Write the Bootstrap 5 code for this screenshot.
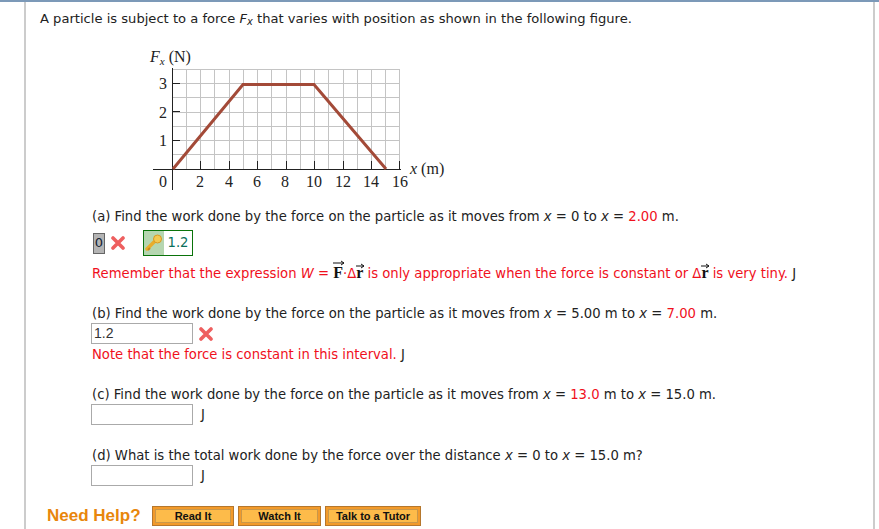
<!DOCTYPE html>
<html lang="en">
<head>
<meta charset="utf-8">
<title>Work problem</title>
<link href="https://cdn.jsdelivr.net/npm/bootstrap@5.3.0/dist/css/bootstrap.min.css" rel="stylesheet">
<style>
html,body{height:529px;overflow:hidden;background:#fff}
body{font-family:"DejaVu Sans",Verdana,sans-serif;font-size:13.1px;line-height:18px;color:#222;border-top:2px solid #7c99b8}
.sheet{margin-left:24px;width:851px;height:527px;border-left:2px solid #ccc;border-right:2px solid #ccc;padding:8px 0 0 14px}
.sheet p{margin:0}
.fig{display:block;margin:13px 0 0 81px}
.fig text{font-family:"Liberation Serif",serif;font-size:16px;fill:#222}
.parts{margin:12px 0 0 52px;font-size:13.2px}
.part{height:61px}
.partb{height:81px}
.parta{height:97px}
.red{color:#f0101c}
.xmark{margin-left:6px}
.vec{font-family:"Liberation Serif",serif;font-weight:700;font-size:16px;color:#111;position:relative;display:inline-block;line-height:14px}
.vec svg{position:absolute;left:0;top:-3px}
.vec .arrowf{left:0;top:-6px}
.unit{color:#222}
.ansrow{height:26px;margin-top:4px}
.remark{margin-top:9px !important}
.wrongbox{height:21px;width:12px;margin-left:1px;background:#b4b4b4;border:1px solid #666;font-size:13px;line-height:18px;text-align:center;color:#123}
.keybox{height:26px;width:50px;border:1px solid #0a730a;margin-left:18px;font-size:13.2px;color:#0a6f5a}
.keyicon{width:20px;background:#b5d6b0}
.keyval{line-height:24px}
.field{width:102px;height:21px;margin-left:-1px;border:1px solid #aaa;font-family:"Liberation Sans",sans-serif;font-size:14px;line-height:19px;padding-left:2px;color:#333;background:#fff}
.fieldrow{height:21px}
.notep{margin-top:2px !important}
.need{font-family:"Liberation Sans",sans-serif;font-weight:700;font-size:17px;color:#e8860c;width:105px;line-height:20px;white-space:nowrap}
.helpbar{margin:-2px 0 0 7px}
.helpbtn{background:#fdbb4a;border:1px solid #b5772d;border-radius:0;padding:0;font-family:"Liberation Sans",sans-serif;font-weight:700;font-size:11px;line-height:18px;height:20px;color:#111;box-shadow:inset 0 0 0 2px #f39a2a,inset 0 0 0 3px #c9974a}
.helpbtn:hover{background:#fdbb4a;color:#111}
.w1{width:82px}.w2{width:83px}.w3{width:96px}
</style>
</head>
<body>
<div class="sheet">
  <p>A particle is subject to a force <i>F<sub>x</sub></i> that varies with position as shown in the following figure.</p>
  <svg class="fig" width="330" height="155" viewBox="0 0 330 155" role="img" aria-label="Graph of force against position">
    <g transform="translate(-120,-41)">
      <g stroke="#c4c4c4" stroke-width="1" fill="none">
        <path d="M185.500 69V169M199.500 69V169M213.500 69V169M228.500 69V169M242.500 69V169M256.500 69V169M270.500 69V169M285.500 69V169M299.500 69V169M313.500 69V169M327.500 69V169M342.500 69V169M356.500 69V169M370.500 69V169M384.500 69V169M398.500 69V169"/>
        <path d="M171 69.500H398M171 83.500H398M171 97.500H398M171 112.500H398M171 126.500H398M171 140.500H398M171 154.500H398"/>
      </g>
      <g stroke="#222" stroke-width="1" fill="none">
        <path d="M171.500 68V190M152 169.500H400"/>
        <path d="M171 83.500H179M171 111.500H179M171 140.500H179"/>
        <path d="M199.500 161V169M228.500 161V169M256.500 161V169M285.500 161V169M313.500 161V169M342.500 161V169M370.500 161V169M398.500 161V169"/>
      </g>
      <path d="M172 169L242 84.500H313L385 169" fill="none" stroke="#a34a38" stroke-width="3"/>
      <text x="149" y="62"><tspan font-style="italic">F</tspan><tspan font-style="italic" font-size="11" dy="3">x</tspan><tspan dy="-3"> (N)</tspan></text>
      <text x="158" y="89">3</text><text x="158" y="118">2</text><text x="158" y="146">1</text>
      <text x="158" y="187">0</text><text x="195" y="187">2</text><text x="224" y="187">4</text>
      <text x="252" y="187">6</text><text x="280" y="187">8</text><text x="305" y="187">10</text>
      <text x="334" y="187">12</text><text x="362" y="187">14</text><text x="391" y="187">16</text>
      <text x="409" y="174"><tspan font-style="italic">x</tspan> (m)</text>
    </g>
  </svg>
  <div class="parts">
    <div class="parta">
      <p>(a) Find the work done by the force on the particle as it moves from <i>x</i> = 0 to <i>x</i> = <span class="red">2.00</span> m.</p>
      <div class="ansrow d-flex align-items-center">
        <div class="wrongbox">0</div>
        <svg class="xmark" width="14" height="14" viewBox="0 0 14 14" aria-hidden="true"><path d="M2 2L12 12M12 2L2 12" stroke="#ee5f5f" stroke-width="3.600" stroke-linecap="round"/></svg>
        <div class="keybox d-flex">
          <span class="keyicon d-flex align-items-center justify-content-center">
            <svg width="18" height="18" viewBox="0 0 18 18" aria-hidden="true"><path d="M2 15L10 7" stroke="#e8ad2c" stroke-width="3.500" stroke-linecap="round"/><path d="M3 16L5 14" stroke="#c98a1a" stroke-width="2"/><circle cx="12.500" cy="5" r="4" fill="#f3c850" stroke="#d69a25"/></svg>
          </span>
          <span class="keyval flex-grow-1 text-center">1.2</span>
        </div>
      </div>
      <p class="red remark">Remember that the expression <i>W</i> = <span class="vec">F<svg class="arrowf" width="12" height="6" viewBox="0 0 12 6" aria-hidden="true"><path d="M0 3H11M8 1L11 3L8 5" stroke="#111" fill="none"/></svg></span>·Δ<span class="vec">r<svg width="9" height="6" viewBox="0 0 9 6" aria-hidden="true"><path d="M0 3H8M5 1L8 3L5 5" stroke="#111" fill="none"/></svg></span> is only appropriate when the force is constant or Δ<span class="vec">r<svg width="9" height="6" viewBox="0 0 9 6" aria-hidden="true"><path d="M0 3H8M5 1L8 3L5 5" stroke="#111" fill="none"/></svg></span> is very tiny. <span class="unit">J</span></p>
    </div>
    <div class="partb">
      <p>(b) Find the work done by the force on the particle as it moves from <i>x</i> = 5.00 m to <i>x</i> = <span class="red">7.00</span> m.</p>
      <div class="fieldrow d-flex align-items-center">
        <div class="field">1.2</div>
        <svg class="xmark" width="14" height="14" viewBox="0 0 14 14" aria-hidden="true"><path d="M2 2L12 12M12 2L2 12" stroke="#ee5f5f" stroke-width="3.600" stroke-linecap="round"/></svg>
      </div>
      <p class="red notep">Note that the force is constant in this interval. <span class="unit">J</span></p>
    </div>
    <div class="part">
      <p>(c) Find the work done by the force on the particle as it moves from <i>x</i> = <span class="red">13.0</span> m to <i>x</i> = 15.0 m.</p>
      <div class="fieldrow d-flex align-items-center gap-2"><div class="field"></div><span>J</span></div>
    </div>
    <div class="part">
      <p>(d) What is the total work done by the force over the distance <i>x</i> = 0 to <i>x</i> = 15.0 m?</p>
      <div class="fieldrow d-flex align-items-center gap-2"><div class="field"></div><span>J</span></div>
    </div>
  </div>
  <div class="helpbar d-flex align-items-center">
    <span class="need">Need Help?</span>
    <button type="button" class="btn helpbtn w1">Read It</button>
    <button type="button" class="btn helpbtn w2 ms-1">Watch It</button>
    <button type="button" class="btn helpbtn w3 ms-1">Talk to a Tutor</button>
  </div>
</div>
</body>
</html>
